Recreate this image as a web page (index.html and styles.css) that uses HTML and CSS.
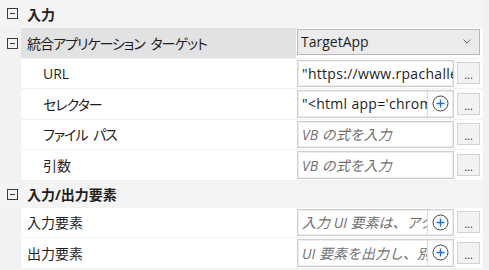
FILE: index.html
```html
<!DOCTYPE html>
<html lang="ja">
<head>
  <meta charset="UTF-8">
  <title>プロパティ</title>
  <link rel="stylesheet" href="styles.css">
</head>
<body>
  <div class="grid">
    <div class="cat">
      <span class="toggle"><svg width="11" height="11"><rect x="0.5" y="0.5" width="10" height="10" fill="none" stroke="#3a3a3a"/><line x1="3" y1="5.5" x2="8" y2="5.5" stroke="#3a3a3a"/></svg></span>
      <span>入力</span>
    </div>
    <div class="prop selected">
      <span class="toggle"><svg width="11" height="11"><rect x="0.5" y="0.5" width="10" height="10" fill="none" stroke="#3a3a3a"/><line x1="3" y1="5.5" x2="8" y2="5.5" stroke="#3a3a3a"/></svg></span>
      <div class="label kana">統合アプリケーション ターゲット</div>
      <div class="value">
        <div class="select">
          <span>TargetApp</span>
          <svg width="8" height="5"><polyline points="0.5,0.5 4,4 7.5,0.5" fill="none" stroke="#666"/></svg>
        </div>
      </div>
    </div>
    <div class="prop">
      <span></span>
      <div class="label">URL</div>
      <div class="value">
        <div class="field"><span class="text">"https://www.rpachallenge.com/"</span></div>
        <div class="more">...</div>
      </div>
    </div>
    <div class="prop">
      <span></span>
      <div class="label kana">セレクター</div>
      <div class="value">
        <div class="field">
          <span class="text">"&lt;html app='chrome.exe' /&gt;"</span>
          <span class="add"><svg width="17" height="17"><circle cx="8.5" cy="8.5" r="7.5" fill="none" stroke="#444"/><path d="M8.5 4.5v8M4.5 8.5h8" stroke="#1f6fd6" stroke-width="1.4"/></svg></span>
        </div>
        <div class="more">...</div>
      </div>
    </div>
    <div class="prop">
      <span></span>
      <div class="label kana">ファイル パス</div>
      <div class="value">
        <div class="field"><span class="text hint">VB の式を入力</span></div>
        <div class="more">...</div>
      </div>
    </div>
    <div class="prop">
      <span></span>
      <div class="label">引数</div>
      <div class="value">
        <div class="field"><span class="text hint">VB の式を入力</span></div>
        <div class="more">...</div>
      </div>
    </div>
    <div class="cat cat2">
      <span class="toggle"><svg width="11" height="11"><rect x="0.5" y="0.5" width="10" height="10" fill="none" stroke="#3a3a3a"/><line x1="3" y1="5.5" x2="8" y2="5.5" stroke="#3a3a3a"/></svg></span>
      <span>入力/出力要素</span>
    </div>
    <div class="prop">
      <span></span>
      <div class="label plain">入力要素</div>
      <div class="value">
        <div class="field">
          <span class="text hint">入力 UI 要素は、アクティビティで使用されます</span>
          <span class="add"><svg width="17" height="17"><circle cx="8.5" cy="8.5" r="7.5" fill="none" stroke="#444"/><path d="M8.5 4.5v8M4.5 8.5h8" stroke="#1f6fd6" stroke-width="1.4"/></svg></span>
        </div>
        <div class="more">...</div>
      </div>
    </div>
    <div class="prop">
      <span></span>
      <div class="label plain">出力要素</div>
      <div class="value">
        <div class="field">
          <span class="text hint">UI 要素を出力し、別のアクティビティで使用します</span>
          <span class="add"><svg width="17" height="17"><circle cx="8.5" cy="8.5" r="7.5" fill="none" stroke="#444"/><path d="M8.5 4.5v8M4.5 8.5h8" stroke="#1f6fd6" stroke-width="1.4"/></svg></span>
        </div>
        <div class="more">...</div>
      </div>
    </div>
  </div>
</body>
</html>
```

FILE: styles.css
```css
body {
  margin: 0;
  background: #f2f2f2;
  font-family: "Open Sans", "Noto Sans CJK JP", sans-serif;
  font-size: 14px;
  color: #1e1e1e;
  font-feature-settings: "palt";
}
.grid {
  width: 483px;
  display: flex;
  flex-direction: column;
  gap: 1px;
}
.cat {
  height: 27px;
  display: flex;
  align-items: center;
  font-weight: bold;
  background: #f4f4f4;
}
.cat2 {
  height: 25px;
  margin-top: 1px;
}
.toggle {
  width: 20px;
  padding-left: 7px;
  box-sizing: border-box;
  display: flex;
  align-items: center;
  height: 100%;
  flex-shrink: 0;
}
.cat .toggle {
  width: 27px;
}
.prop {
  height: 29.5px;
  display: grid;
  grid-template-columns: 21px 1fr 187px;
}
.prop .toggle {
  width: 21px;
  padding-top: 1px;
}
.label {
  background: #fff;
  padding-left: 22px;
  display: flex;
  align-items: center;
  white-space: pre;
}
.label.kana {
  letter-spacing: -1px;
  word-spacing: 3px;
}
.label.plain {
  padding-left: 6px;
}
.selected .label {
  background: #e2e2e2;
  padding-left: 6px;
}
.value {
  background: #fff;
  display: flex;
  align-items: center;
  gap: 3px;
  padding: 1px 3px 1px 1px;
  box-sizing: border-box;
  min-width: 0;
}
.select {
  flex: 1;
  height: 26px;
  margin-top: -2px;
  border: 1px solid #b9b9b9;
  background: #ebebeb;
  display: flex;
  align-items: center;
  justify-content: space-between;
  padding: 0 8px 0 3px;
  box-sizing: border-box;
}
.field {
  flex: 1;
  height: 100%;
  min-width: 0;
  border: 1px solid #cfcfcf;
  box-shadow: inset 0 0 0 1px #ededed;
  display: flex;
  align-items: center;
  box-sizing: border-box;
  background: #fff;
}
.text {
  flex: 1;
  min-width: 0;
  overflow: hidden;
  white-space: nowrap;
  padding-left: 4px;
  letter-spacing: 0.3px;
}
.hint {
  color: #707070;
  font-style: italic;
  letter-spacing: 0;
  font-feature-settings: normal;
}
.add {
  width: 25px;
  height: 100%;
  border-left: 1px solid #dcdcdc;
  display: flex;
  align-items: center;
  justify-content: center;
  flex-shrink: 0;
}
.more {
  width: 23px;
  height: 22px;
  flex-shrink: 0;
  border: 1px solid #d3d3d3;
  background: #f2f2f2;
  box-sizing: border-box;
  font-size: 11px;
  line-height: 24px;
  text-align: center;
  color: #333;
}
```
